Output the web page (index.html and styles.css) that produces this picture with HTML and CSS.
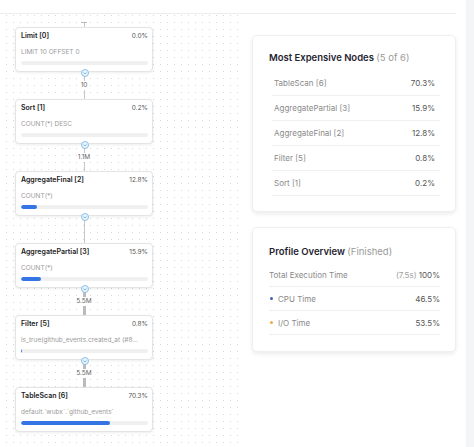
FILE: index.html
```html
<!DOCTYPE html>
<html>
<head>
<meta charset="utf-8">
<link rel="stylesheet" href="styles.css">
</head>
<body>
<div class="app">
  <div class="main">
    <div class="topbar"></div>
    <div class="content">
      <div class="canvas">
        <div class="flow">
          <div class="stub"><span class="stub-dash"></span></div>

          <div class="node">
            <div class="node-head"><span class="node-title">Limit [0]</span><span class="node-pct">0.0%</span></div>
            <div class="node-desc">LIMIT 10 OFFSET 0</div>
            <div class="bar"><div class="bar-fill" style="width:0%"></div></div>
          </div>
          <div class="edge">
            <span class="handle"><svg viewBox="0 0 6 6" width="6" height="6"><polyline points="1.5,2.5 3,4 4.5,2.5" fill="none" stroke="#6aa8d8" stroke-width="0.8"/></svg></span>
            <span class="elabel">10</span>
          </div>

          <div class="node">
            <div class="node-head"><span class="node-title">Sort [1]</span><span class="node-pct">0.2%</span></div>
            <div class="node-desc">COUNT(*) DESC</div>
            <div class="bar"><div class="bar-fill" style="width:0%"></div></div>
          </div>
          <div class="edge">
            <span class="handle"><svg viewBox="0 0 6 6" width="6" height="6"><polyline points="1.5,2.5 3,4 4.5,2.5" fill="none" stroke="#6aa8d8" stroke-width="0.8"/></svg></span>
            <span class="elabel">1.1M</span>
          </div>

          <div class="node">
            <div class="node-head"><span class="node-title">AggregateFinal [2]</span><span class="node-pct">12.8%</span></div>
            <div class="node-desc">COUNT(*)</div>
            <div class="bar"><div class="bar-fill" style="width:12.8%"></div></div>
          </div>
          <div class="edge">
            <span class="handle"><svg viewBox="0 0 6 6" width="6" height="6"><polyline points="1.5,2.5 3,4 4.5,2.5" fill="none" stroke="#6aa8d8" stroke-width="0.8"/></svg></span>
          </div>

          <div class="node">
            <div class="node-head"><span class="node-title">AggregatePartial [3]</span><span class="node-pct">15.9%</span></div>
            <div class="node-desc">COUNT(*)</div>
            <div class="bar"><div class="bar-fill" style="width:15.9%"></div></div>
          </div>
          <div class="edge thick">
            <span class="handle"><svg viewBox="0 0 6 6" width="6" height="6"><polyline points="1.5,2.5 3,4 4.5,2.5" fill="none" stroke="#6aa8d8" stroke-width="0.8"/></svg></span>
            <span class="elabel">5.5M</span>
          </div>

          <div class="node">
            <div class="node-head"><span class="node-title">Filter [5]</span><span class="node-pct">0.8%</span></div>
            <div class="node-desc">is_true(github_events.created_at (#8...</div>
            <div class="bar"><div class="bar-fill" style="width:0.8%"></div></div>
          </div>
          <div class="edge thick">
            <span class="handle"><svg viewBox="0 0 6 6" width="6" height="6"><polyline points="1.5,2.5 3,4 4.5,2.5" fill="none" stroke="#6aa8d8" stroke-width="0.8"/></svg></span>
            <span class="elabel">5.5M</span>
          </div>

          <div class="node">
            <div class="node-head"><span class="node-title">TableScan [6]</span><span class="node-pct">70.3%</span></div>
            <div class="node-desc">default.`wubx`.`github_events`</div>
            <div class="bar"><div class="bar-fill" style="width:70.3%"></div></div>
          </div>
        </div>
      </div>

      <div class="side">
        <section class="card card-exp">
          <h2 class="card-title">Most Expensive Nodes <span class="muted">(5 of 6)</span></h2>
          <div class="exp-list">
            <div class="row"><span>TableScan [6]</span><span class="val">70.3%</span></div>
            <div class="row"><span>AggregatePartial [3]</span><span class="val">15.9%</span></div>
            <div class="row"><span>AggregateFinal [2]</span><span class="val">12.8%</span></div>
            <div class="row"><span>Filter [5]</span><span class="val">0.8%</span></div>
            <div class="row"><span>Sort [1]</span><span class="val">0.2%</span></div>
          </div>
        </section>

        <section class="card card-prof">
          <h2 class="card-title">Profile Overview <span class="muted">(Finished)</span></h2>
          <div class="prof-list">
            <div class="row prow"><span>Total Execution Time</span><span class="val"><span class="light">(7.5s)</span> 100%</span></div>
            <div class="row prow"><span class="lbl"><span class="dot dot-cpu"></span>CPU Time</span><span class="val">46.5%</span></div>
            <div class="row prow"><span class="lbl"><span class="dot dot-io"></span>I/O Time</span><span class="val">53.5%</span></div>
          </div>
        </section>
      </div>
    </div>
  </div>
  <div class="strip"></div>
</div>
</body>
</html>
```

FILE: styles.css
```css
html, body {
  margin: 0;
  padding: 0;
}
body {
  width: 474px;
  height: 447px;
  overflow: hidden;
  background: #fff;
  font-family: Inter, "Noto Sans", "Liberation Sans", sans-serif;
}
.app {
  display: flex;
  height: 447px;
}
.main {
  width: 456px;
  display: flex;
  flex-direction: column;
}
.topbar {
  height: 13px;
  flex: none;
  border-bottom: 1px solid #ededed;
}
.content {
  flex: 1;
  display: flex;
  min-height: 0;
}
.canvas {
  width: 238px;
  flex: none;
  background:
    linear-gradient(90deg, #fff 6px, transparent 6px) 0 2px / 7px 7px,
    linear-gradient(#fff 6px, #d6d6d6 6px) 0 2px / 7px 7px;
}
.strip {
  margin-left: 10px;
  width: 8px;
  background: #f4f5f6;
}

/* flow */
.flow {
  padding-left: 15px;
  width: 138px;
}
.stub {
  height: 13px;
  position: relative;
}
.stub::before {
  content: "";
  position: absolute;
  left: 68.5px;
  top: 8px;
  bottom: 0;
  width: 1px;
  background: #c8c8c8;
}
.stub-dash {
  position: absolute;
  left: 66px;
  top: 7.5px;
  width: 6px;
  height: 1.5px;
  background: #b5b5b5;
  border-radius: 1px;
}
.node {
  width: 138px;
  height: 45px;
  box-sizing: border-box;
  background: #fff;
  border: 1px solid #e4e4e4;
  border-radius: 4px;
  box-shadow: 0 1px 3px rgba(0, 0, 0, 0.07);
  padding: 4px 4px 0 5px;
}
.node-head {
  display: flex;
  justify-content: space-between;
  line-height: 8px;
  font-size: 7px;
}
.node-title {
  font-weight: 600;
  color: #222;
}
.node-pct {
  color: #555;
  font-size: 6.5px;
}
.node-desc {
  margin-top: 8px;
  line-height: 8px;
  font-size: 6.5px;
  color: #9b9b9b;
  white-space: nowrap;
  overflow: hidden;
}
.bar {
  margin-top: 5px;
  height: 4px;
  border-radius: 2px;
  background: #f0f0f0;
  overflow: hidden;
}
.bar-fill {
  height: 100%;
  background: #3574e3;
  border-radius: 2px;
}
.edge {
  height: 27px;
  position: relative;
}
.edge::before {
  content: "";
  position: absolute;
  left: 68.5px;
  top: 0;
  bottom: 0;
  width: 1px;
  background: #c8c8c8;
}
.edge.thick::before {
  left: 67.5px;
  width: 3px;
  background: #bcbcbc;
}
.handle {
  position: absolute;
  left: 65.5px;
  top: -3.5px;
  width: 6px;
  height: 6px;
  border: 1px solid #8fc1e6;
  border-radius: 50%;
  background: #e8f3fb;
  display: flex;
  z-index: 1;
}
.handle svg {
  display: block;
}
.elabel {
  position: absolute;
  left: 50%;
  transform: translateX(-50%);
  top: 8.5px;
  line-height: 9px;
  font-size: 6.5px;
  color: #666;
  background: #fff;
  padding: 0 1px;
}

/* side */
.side {
  padding: 21px 0 0 14px;
  display: flex;
  flex-direction: column;
  gap: 15px;
}
.card {
  width: 204px;
  box-sizing: border-box;
  background: #fff;
  border: 1px solid #efefef;
  border-radius: 5px;
  box-shadow: 0 2px 4px rgba(0, 0, 0, 0.08);
}
.card-exp {
  padding: 16px 15px 15px 16px;
}
.card-prof {
  padding: 18px 15px 16px 16px;
}
.card-title {
  margin: 0;
  font-size: 9.5px;
  line-height: 12px;
  font-weight: 600;
  color: #1f2430;
}
.card-title .muted {
  font-weight: 400;
  color: #9a9a9a;
}
.exp-list {
  margin: 7px 0 0 3px;
}
.prof-list {
  margin-top: 5px;
}
.row {
  display: flex;
  justify-content: space-between;
  align-items: center;
  height: 25px;
  box-sizing: border-box;
  border-bottom: 1px solid #efefef;
  font-size: 8px;
  color: #8a8a8a;
  padding: 0 5px 0 2px;
}
.row .val {
  color: #555;
}
.prow {
  height: 24px;
  padding: 0;
}
.light {
  color: #a0a0a0;
}
.lbl {
  display: flex;
  align-items: center;
}
.dot {
  width: 3px;
  height: 3px;
  border-radius: 50%;
  margin: 0 5px 0 1px;
}
.dot-cpu {
  background: #3d5fb8;
}
.dot-io {
  background: #f0a849;
}
```
